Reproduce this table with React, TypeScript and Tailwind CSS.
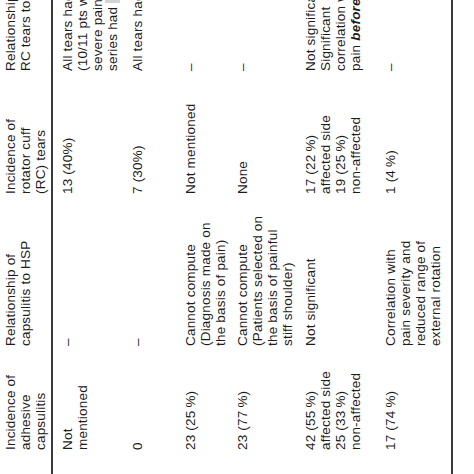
import React from "react";

const C1 = "w-[104px] shrink-0";
const C2 = "w-[152px] shrink-0";
const C3 = "w-[123px] shrink-0";
const C4 = "shrink-0 whitespace-nowrap";

function Row({ h, cells }: { h: string; cells: React.ReactNode[] }) {
  return (
    <div className={`flex pl-[24px] whitespace-nowrap ${h}`}>
      <div className={C1}>{cells[0]}</div>
      <div className={C2}>{cells[1]}</div>
      <div className={C3}>{cells[2]}</div>
      <div className={C4}>{cells[3]}</div>
    </div>
  );
}

export default function App() {
  const ts = "\u2009";
  return (
    <div className="relative w-[474px] h-[474px] overflow-hidden bg-white">
      <div className="absolute left-0 top-[474px] w-[640px] h-[474px] origin-top-left -rotate-90 font-['Liberation_Sans',Arial,sans-serif] text-[13.5px] leading-[15px] text-[#1c1c1c] tracking-[0.2px]">
        <div className="h-[53px] pt-[2.5px] border-b-2 border-[#3a3a3a]">
          <Row
            h=""
            cells={[
              <>Incidence of<br />adhesive<br />capsulitis</>,
              <>Relationship of<br />capsulitis to HSP</>,
              <>Incidence of<br />rotator cuff<br />(RC) tears</>,
              <>Relationship of<br />RC tears to HSP</>,
            ]}
          />
        </div>
        <div className="pt-[6.5px] pb-[8.5px] border-b-2 border-[#3a3a3a]">
          <Row
            h="h-[70px]"
            cells={[
              <>Not<br />mentioned</>,
              <>–</>,
              <>13 (40%)</>,
              <>All tears had pain<br />(10/11 pts with<br />severe pain); whole<br />series had <span className="bg-[#d4d4d4] text-[#d4d4d4]">pain</span></>,
            ]}
          />
          <Row h="h-[53px]" cells={[<>0</>, <>–</>, <>7 (30%)</>, <>All tears had pain</>]} />
          <Row
            h="h-[52px]"
            cells={[
              <>23 (25{ts}%)</>,
              <>Cannot compute<br />(Diagnosis made on<br />the basis of pain)</>,
              <>Not mentioned</>,
              <>–</>,
            ]}
          />
          <Row
            h="h-[68px]"
            cells={[
              <>23 (77{ts}%)</>,
              <>Cannot compute<br />(Patients selected on<br />the basis of painful<br />stiff shoulder)</>,
              <>None</>,
              <>–</>,
            ]}
          />
          <Row
            h="h-[80px]"
            cells={[
              <>42 (55{ts}%)<br />affected side<br />25 (33{ts}%)<br />non-affected</>,
              <>Not significant</>,
              <>17 (22{ts}%)<br />affected side<br />19 (25{ts}%)<br />non-affected</>,
              <>Not significant<br />Significant<br />correlation with<br />pain <b><i>before</i></b> stroke</>,
            ]}
          />
          <Row
            h="h-[60px]"
            cells={[
              <>17 (74{ts}%)</>,
              <>Correlation with<br />pain severity and<br />reduced range of<br />external rotation</>,
              <>1 (4{ts}%)</>,
              <>–</>,
            ]}
          />
        </div>
      </div>
    </div>
  );
}
